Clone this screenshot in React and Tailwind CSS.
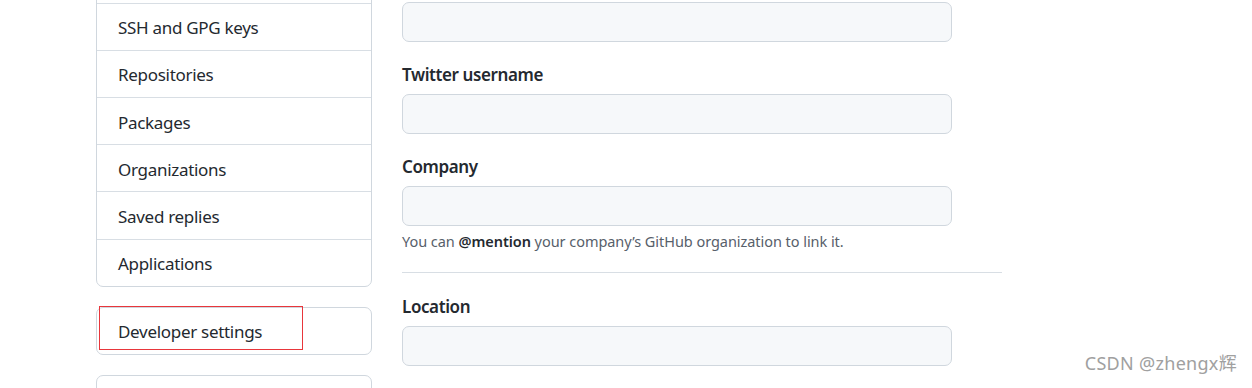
import React from "react";

const font = { fontFamily: '"Noto Sans", "Noto Sans CJK SC", sans-serif' };

function Row({ children, first }) {
  return (
    <div className={`h-[47.1px] flex items-center pl-[21px] pt-[2px] ${first ? "" : "border-t border-[#d8dee4]"}`}>
      {children}
    </div>
  );
}

function Field({ label, children }) {
  return (
    <div className="flex flex-col">
      <div className="h-[24px] flex items-center pt-[1px] text-[17px] tracking-[-0.4px] font-semibold text-[#24292f]">{label}</div>
      <div className="h-[8px]" />
      <div className="h-[40px] w-[550px] rounded-[7px] border border-[#d0d7de] bg-[#f6f8fa]" />
      {children}
    </div>
  );
}

export default function App() {
  return (
    <div className="w-[1252px] h-[388px] overflow-hidden bg-white relative text-[#24292f]" style={font}>
      <div className="flex pl-[96px]">
        {/* sidebar */}
        <div className="w-[276px] flex flex-col text-[17px] tracking-[-0.3px]">
          <div className="mt-[-45px] rounded-[7px] border border-[#d0d7de] flex flex-col">
            <Row first />
            <Row>SSH and GPG keys</Row>
            <Row>Repositories</Row>
            <Row>Packages</Row>
            <Row>Organizations</Row>
            <Row>Saved replies</Row>
            <Row>Applications</Row>
          </div>
          <div className="mt-[20px] relative h-[48px] rounded-[7px] border border-[#d0d7de] flex items-center pl-[21px] pt-[2px]">
            Developer settings
            <div className="absolute left-[2px] top-[-2px] w-[204px] h-[44px] border border-[#e8363b]" />
          </div>
          <div className="mt-[20px] h-[48px] rounded-[7px] border border-[#d0d7de]" />
        </div>
        {/* form */}
        <div className="ml-[30px] pt-[2px] flex flex-col w-[600px]">
          <div className="h-[40px] w-[550px] rounded-[7px] border border-[#d0d7de] bg-[#f6f8fa]" />
          <div className="h-[20px]" />
          <Field label="Twitter username" />
          <div className="h-[20px]" />
          <Field label="Company">
            <div className="mt-[6px] h-[20px] flex items-center text-[14.5px] tracking-[-0.05px] text-[#57606a]">
              <span>You can <span className="font-semibold text-[#24292f]">@mention</span> your company’s GitHub organization to link it.</span>
            </div>
          </Field>
          <div className="mt-[20px] h-px w-[600px] bg-[#d8dee4]" />
          <div className="h-[21px]" />
          <Field label="Location" />
        </div>
      </div>
      <div className="absolute right-[15px] bottom-[11px] text-[18px] tracking-[0.3px] text-[#a0a0a0] [text-shadow:0_1px_1px_rgba(255,255,255,0.9)]" style={font}>
        CSDN @zhengx辉
      </div>
    </div>
  );
}
